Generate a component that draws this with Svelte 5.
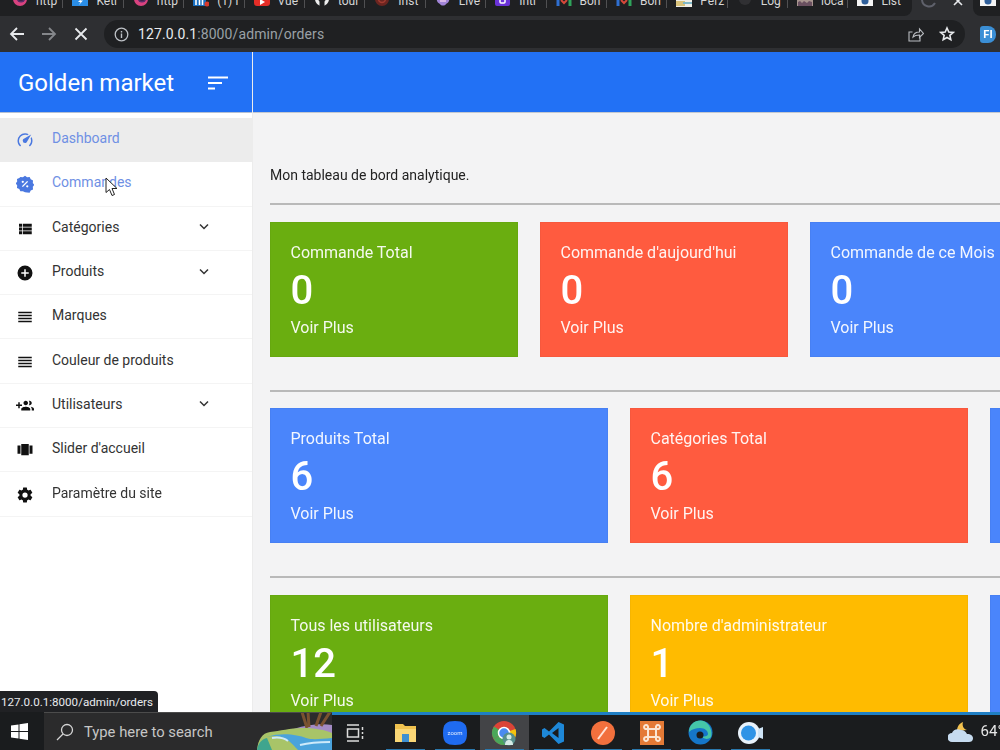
<script>
  const tabs = [
    ['http', 'swirl'], ['Keti', 'bolt'], ['http', 'swirl'], ['(1) I', 'in'], ['Vue', 'yt'],
    ['tour', 'gh'], ['Inst', 'ins'], ['Live', 'live'], ['Intr', 'bs'], ['Bon', 'bon'],
    ['Bon', 'bon'], ['Perz', 'perz'], ['Log', 'log'], ['loca', 'loca'], ['List', 'list']
  ];
  const I = {
    gauge: 'M12,16A3,3 0 0,1 9,13C9,11.88 9.61,10.9 10.5,10.39L20.21,4.77L14.68,14.35C14.18,15.33 13.17,16 12,16M12,3C13.81,3 15.5,3.5 16.97,4.32L14.87,5.53C14,5.19 13,5 12,5A8,8 0 0,0 4,13C4,15.21 4.89,17.21 6.34,18.65H6.35C6.74,19.04 6.74,19.67 6.35,20.06C5.96,20.45 5.32,20.45 4.93,20.07V20.07C3.12,18.26 2,15.76 2,13A10,10 0 0,1 12,3M22,13C22,15.76 20.88,18.26 19.07,20.07V20.07C18.68,20.45 18.05,20.45 17.66,20.06C17.27,19.67 17.27,19.04 17.66,18.65V18.65C19.11,17.2 20,15.2 20,13C20,12 19.81,11 19.46,10.1L20.67,8C21.5,9.5 22,11.18 22,13Z',
    badge: 'M12 1l2.800 2 3.400-.3 1.400 3.100 3.100 1.400-.3 3.400 2 2.400-2 2.800.3 3.400-3.100 1.400-1.400 3.100-3.400-.3L12 23l-2.800-1.500-3.400.3-1.400-3.100-3.100-1.400.3-3.400-2-2.800 2-2.400-.3-3.400 3.100-1.400L5.800 2.700l3.400.3z',
    list: 'M9,5V9H21V5M9,19H21V15H9M9,14H21V10H9M4,9H8V5H4M4,19H8V15H4M4,14H8V10H4V14Z',
    plus: 'M17,13H13V17H11V13H7V11H11V7H13V11H17M12,2A10,10 0 0,0 2,12A10,10 0 0,0 12,22A10,10 0 0,0 22,12A10,10 0 0,0 12,2Z',
    lines: 'M3 15h18v-2H3v2zm0 4h18v-2H3v2zm0-8h18V9H3v2zm0-6v2h18V5H3z',
    group: 'M8 10H5V7H3v3H0v2h3v3h2v-3h3v-2zm10 1c1.66 0 2.99-1.34 2.99-3S19.66 5 18 5c-.32 0-.63.05-.91.14.57.81.9 1.79.9 2.86s-.34 2.04-.9 2.86c.28.09.59.14.91.14zm-5 0c1.66 0 2.99-1.34 2.99-3S14.66 5 13 5s-3 1.34-3 3 1.34 3 3 3zm6.62 2.16c.83.73 1.38 1.66 1.38 2.84v2h3v-2c0-1.54-2.37-2.49-4.38-2.84zM13 13c-2 0-6 1-6 3v2h12v-2c0-2-4-3-6-3z',
    slider: 'M7 19h10V4H7v15zm-5-2h4V6H2v11zM18 6v11h4V6h-4z',
    gear: 'M12,15.5A3.5,3.5 0 0,1 8.5,12A3.5,3.5 0 0,1 12,8.5A3.5,3.5 0 0,1 15.5,12A3.5,3.5 0 0,1 12,15.5M19.43,12.97C19.47,12.65 19.5,12.33 19.5,12C19.5,11.67 19.47,11.34 19.43,11L21.54,9.37C21.73,9.22 21.78,8.95 21.66,8.73L19.66,5.27C19.54,5.05 19.27,4.96 19.05,5.05L16.56,6.05C16.04,5.66 15.5,5.32 14.87,5.07L14.5,2.42C14.46,2.18 14.25,2 14,2H10C9.75,2 9.54,2.18 9.5,2.42L9.13,5.07C8.5,5.32 7.96,5.66 7.44,6.05L4.95,5.05C4.73,4.96 4.46,5.05 4.34,5.27L2.34,8.73C2.21,8.95 2.27,9.22 2.46,9.37L4.57,11C4.53,11.34 4.5,11.67 4.5,12C4.5,12.33 4.53,12.65 4.57,12.97L2.46,14.63C2.27,14.78 2.21,15.05 2.34,15.27L4.34,18.73C4.46,18.95 4.73,19.03 4.95,18.95L7.44,17.94C7.96,18.34 8.5,18.68 9.13,18.93L9.5,21.58C9.54,21.82 9.75,22 10,22H14C14.25,22 14.46,21.82 14.5,21.58L14.87,18.93C15.5,18.67 16.04,18.34 16.56,17.94L19.05,18.95C19.27,19.03 19.54,18.95 19.66,18.73L21.66,15.27C21.78,15.05 21.73,14.78 21.54,14.63L19.43,12.97Z'
  };
  const menu = [
    { label: 'Dashboard', icon: I.gauge, state: 'active' },
    { label: 'Commandes', icon: I.badge, state: 'hot', percent: true },
    { label: 'Catégories', icon: I.list, more: true },
    { label: 'Produits', icon: I.plus, more: true },
    { label: 'Marques', icon: I.lines },
    { label: 'Couleur de produits', icon: I.lines },
    { label: 'Utilisateurs', icon: I.group, more: true },
    { label: "Slider d'accueil", icon: I.slider },
    { label: 'Paramètre du site', icon: I.gear }
  ];
  const rows = [
    { kind: 'r3', cards: [
      ['Commande Total', '0', 'green'], ["Commande d'aujourd'hui", '0', 'red'], ['Commande de ce Mois', '0', 'blue']
    ]},
    { kind: 'r2', cards: [
      ['Produits Total', '6', 'blue'], ['Catégories Total', '6', 'red'], ['Marques Total', '0', 'blue']
    ]},
    { kind: 'r2', cards: [
      ['Tous les utilisateurs', '12', 'green'], ["Nombre d'administrateur", '1', 'yellow'], ['Clients', '11', 'blue']
    ]}
  ];
</script>

{#snippet fav(kind)}
  <svg class="fav" width="16" height="16" viewBox="0 0 16 16">
    {#if kind === 'swirl'}
      <circle cx="8" cy="7" r="7" fill="#d9437f"/><circle cx="9" cy="6" r="4.500" fill="#5d2a6b"/><circle cx="9" cy="5" r="3.500" fill="#1f2022"/>
    {:else if kind === 'bolt'}
      <rect width="16" height="14" fill="#2a8de6"/><path d="M10 6l-4 4h2.500L7 13l4-4.500H8.500z" fill="#fff"/>
    {:else if kind === 'in'}
      <rect width="13" height="14" fill="#1a6fc0"/><path d="M3 8v5M6.500 13V8M9.500 13V8" stroke="#fff" stroke-width="1.600"/><circle cx="14" cy="12" r="2.500" fill="#d8392c"/>
    {:else if kind === 'yt'}
      <rect width="16" height="14" rx="3" fill="#e52d27"/><path d="M6 7l5 3-5 3z" fill="#fff"/>
    {:else if kind === 'gh'}
      <circle cx="8" cy="7" r="7" fill="#ededed"/><circle cx="8" cy="6" r="4" fill="#1f2022"/><rect x="5.500" y="9" width="5" height="5" fill="#1f2022"/>
    {:else if kind === 'ins'}
      <circle cx="8" cy="7" r="7" fill="#6b2520"/><circle cx="8" cy="7" r="3.500" fill="none" stroke="#a13a30" stroke-width="1.500"/>
    {:else if kind === 'live'}
      <path d="M2 6h12c1 3-1 5-3 6-1 2-5 2-6 0-2-1-4-3-3-6z" fill="#a285d8"/><path d="M5 8h6v2H5z" fill="#d9b8e8"/>
    {:else if kind === 'bs'}
      <rect width="15" height="14" rx="2" fill="#6a32d8"/><rect x="5" y="6" width="5" height="5" rx="1" fill="none" stroke="#fff" stroke-width="1.500"/>
    {:else if kind === 'bon'}
      <path d="M2 8v6" stroke="#2f6fd0" stroke-width="3"/><path d="M5 8l3 3 3-3" stroke="#d8493a" stroke-width="2" fill="none"/><path d="M14 8v6" stroke="#2fa35a" stroke-width="3"/>
    {:else if kind === 'perz'}
      <rect width="16" height="15" fill="#f1efe6"/><rect y="9" width="9" height="5" fill="#d8c27a"/><rect x="7" y="10" width="9" height="2" fill="#7fb7c7"/>
    {:else if kind === 'log'}
      <circle cx="8" cy="7" r="6" fill="#303033"/>
    {:else if kind === 'loca'}
      <rect width="16" height="14" fill="#a8958f"/><path d="M1 14V10l2-1 2 2 2-2 3 2 2-2 3 1v4z" fill="#6a5060"/>
    {:else}
      <rect width="16" height="14" fill="#f5f5f5"/><circle cx="8" cy="9" r="3.500" fill="#2f5f9a"/>
    {/if}
  </svg>
{/snippet}

<div class="screen">
  <div class="tabstrip">
    <div class="tabgroup">
      {#each tabs as t}
        <div class="tab">
          {@render fav(t[1])}
          <span class="tabtext">{t[0]}</span>
        </div>
      {/each}
    </div>
    <div class="tabactive">
      <svg width="16" height="10" viewBox="0 0 16 10"><path d="M1 0a7 7 0 0 0 13 3" fill="none" stroke="#5f616b" stroke-width="2"/></svg>
      <svg width="12" height="6" viewBox="0 0 12 6"><path d="M2 -3L10 5M10 -3L2 5" stroke="#e8eaed" stroke-width="1.600"/></svg>
    </div>
    <div class="nexttab">
      {@render fav('list')}
    </div>
  </div>

  <div class="toolbar">
    <svg class="navicon" width="16" height="16" viewBox="0 0 16 16"><path d="M15 8H2M8 2L2 8l6 6" fill="none" stroke="#e8eaed" stroke-width="1.800"/></svg>
    <svg class="navicon" width="16" height="16" viewBox="0 0 16 16"><path d="M1 8h13M8 2l6 6-6 6" fill="none" stroke="#85878b" stroke-width="1.800"/></svg>
    <svg class="navicon" width="16" height="16" viewBox="0 0 16 16"><path d="M2.500 2.500l11 11M13.500 2.500l-11 11" fill="none" stroke="#e8eaed" stroke-width="1.800"/></svg>
    <div class="omnibox">
      <svg width="15" height="15" viewBox="0 0 15 15"><circle cx="7.500" cy="7.500" r="6.300" fill="none" stroke="#bdc1c6" stroke-width="1.300"/><path d="M7.500 6.500v4.500M7.500 4v1.500" stroke="#bdc1c6" stroke-width="1.400"/></svg>
      <span class="url"><b>127.0.0.1</b>:8000/admin/orders</span>
      <span class="grow"></span>
      <svg width="17" height="17" viewBox="0 0 17 17"><path d="M13 9.500V15H2V6h3.500M6 11c.5-3 3-5 6.500-5V3l4 4.500-4 4V9c-3 0-5 .5-6.500 2z" fill="none" stroke="#b9bcc1" stroke-width="1.100"/></svg>
      <svg width="16" height="16" viewBox="0 0 24 24"><path d="M12 3l2.700 6 6.500.7-4.900 4.300 1.400 6.500L12 17.200 6.300 20.500l1.400-6.500-4.900-4.300 6.500-.7z" fill="none" stroke="#e8eaed" stroke-width="2.400"/></svg>
    </div>
    <span class="ext">FI</span>
  </div>

  <div class="page">
    <aside class="sidebar">
      <div class="brand">
        <span class="brandname">Golden market</span>
        <svg width="20" height="14" viewBox="0 0 20 14"><path d="M0 1.500h20M0 7h14M0 12.500h7" stroke="#fff" stroke-width="2"/></svg>
      </div>
      <nav class="menu">
        {#each menu as m}
          <div class="item {m.state ?? ''}">
            <svg class="micon" width="18" height="18" viewBox="0 0 24 24">
              <path d={m.icon} fill="currentColor"/>
              {#if m.percent}
                <path d="M15.500 8.500l-7 7" stroke="#fff" stroke-width="1.800"/>
                <circle cx="9" cy="9" r="1.500" fill="#fff"/>
                <circle cx="15" cy="15" r="1.500" fill="#fff"/>
              {/if}
            </svg>
            <span class="mlabel">{m.label}</span>
            {#if m.more}
              <svg class="chev" width="10" height="7" viewBox="0 0 10 7"><path d="M1 1.500l4 4 4-4" fill="none" stroke="#333" stroke-width="1.500"/></svg>
            {/if}
          </div>
        {/each}
      </nav>
    </aside>

    <div class="content">
      <div class="topbar"></div>
      <main class="main">
        <p class="lead">Mon tableau de bord analytique.</p>
        {#each rows as row}
          <hr />
          <div class="row {row.kind}">
            {#each row.cards as c}
              <div class="card {c[2]}">
                <div class="ctitle">{c[0]}</div>
                <div class="cnum">{c[1]}</div>
                <div class="cmore">Voir Plus</div>
              </div>
            {/each}
          </div>
        {/each}
      </main>
    </div>

    <div class="status">127.0.0.1:8000/admin/orders</div>
    <svg class="cursor" width="14" height="20" viewBox="0 0 14 20"><path d="M1 1v14.500l3.500-3 2.500 6 2.500-1-2.500-6h5z" fill="#fff" stroke="#222" stroke-width="1"/></svg>
  </div>

  <div class="taskbar">
    <svg class="win" width="17" height="17" viewBox="0 0 17 17"><path d="M0 2.500L7.500 1.400V8H0zM8.500 1.300L17 0v8H8.500zM0 9h7.500v6.600L0 14.500zM8.500 9H17v8l-8.500-1.300z" fill="#fff"/></svg>
    <div class="search">
      <svg width="20" height="20" viewBox="0 0 20 20"><circle cx="12" cy="8" r="5.500" fill="none" stroke="#d5d5d5" stroke-width="1.300"/><path d="M8 12l-6 6" stroke="#d5d5d5" stroke-width="1.300"/></svg>
      <span>Type here to search</span>
      <svg class="scene" width="76" height="38" viewBox="0 0 76 38">
        <path d="M36 18c8-4 26-7 40-5v10H36z" fill="#a38bc4"/>
        <path d="M46 0l5 16M52 0l1 15M65 0l-5 14M74 0l-9 14" stroke="#7a5230" stroke-width="3"/>
        <path d="M1 38C2 28 6 21 14 20c10-1 20-4 32-4 12 0 24 2 30 5v17z" fill="#a8c468"/>
        <path d="M1 38C2 31 6 27 11 26l5 12z" fill="#3fa58e"/>
        <path d="M11 25c8-2 14-1 19 2 6 4 8 7 12 11h34V26c-12 1-20 2-26 0-8-3-24-6-39-1z" fill="#4aa3dc"/>
        <path d="M16 26c6-1 12 0 16 3M44 33c8-2 16-3 30-3" stroke="#cdeafa" stroke-width="2" fill="none"/>
      </svg>
    </div>
    <div class="tray">
      <div class="slot first">
        <svg width="20" height="20" viewBox="0 0 20 20"><path d="M2 2h12M2 18h12" stroke="#ddd" stroke-width="1.500"/><rect x="2.500" y="6" width="11" height="8" fill="none" stroke="#ddd" stroke-width="1.500"/><path d="M17.500 4v3M17.500 9v2M17.500 13v3" stroke="#ddd" stroke-width="1.500"/></svg>
      </div>
      <div class="slot run">
        <svg width="23" height="20" viewBox="0 0 23 20"><path d="M1 1h8l2 2h11v16H1z" fill="#f0c24f"/><path d="M1 6h21v13H1z" fill="#fad776"/><rect x="8" y="11" width="7" height="8" fill="#3d8fd1"/></svg>
      </div>
      <div class="slot run">
        <svg width="24" height="24" viewBox="0 0 24 24"><path d="M12 0c9 0 12 3 12 12s-3 12-12 12S0 21 0 12 3 0 12 0z" fill="#1f6bf0"/><text x="12" y="14" font-size="6" fill="#e6efff" text-anchor="middle" font-family="Roboto">zoom</text></svg>
      </div>
      <div class="slot run tile">
        <svg width="26" height="26" viewBox="0 0 26 26"><circle cx="13" cy="13" r="12" fill="#db4437"/><path d="M13 13L2.600 19A12 12 0 0 1 3 6.500z" fill="#4aa75a"/><path d="M13 13l10.400 6A12 12 0 0 0 24.500 9z" fill="#f4c20d"/><path d="M13 13L2.600 19A12 12 0 0 0 23.400 19z" fill="#4aa75a"/><circle cx="13" cy="13" r="5.500" fill="#4a8af0" stroke="#fff" stroke-width="1.500"/><circle cx="18" cy="19" r="6.500" fill="#568f8b"/><circle cx="18" cy="17" r="2.500" fill="#d6ece6"/><path d="M14 25c0-4 2-5 4-5s4 1 4 5z" fill="#d6ece6"/></svg>
      </div>
      <div class="slot run">
        <svg width="24" height="24" viewBox="0 0 24 24"><path d="M17.500 1L8 10.500 3.500 7 1 8.500v7L3.500 17 8 13.500 17.500 23 23 20.500V3.500zM17.500 7v10L11 12z" fill="#1e88d8"/></svg>
      </div>
      <div class="slot run">
        <svg width="24" height="24" viewBox="0 0 24 24"><circle cx="12" cy="12" r="12" fill="#f2703d"/><path d="M7 18l9-12" stroke="#ffe3d6" stroke-width="2"/></svg>
      </div>
      <div class="slot run">
        <svg width="24" height="24" viewBox="0 0 24 24"><rect width="24" height="24" fill="#e47a36"/><path d="M8 8h8v8H8zM8 8H6.500a2 2 0 1 1 1.500-1.500zM16 8V6.500a2 2 0 1 1 1.500 1.500zM16 16h1.500a2 2 0 1 1-1.500 1.500zM8 16v1.500a2 2 0 1 1-1.500-1.500z" fill="none" stroke="#fbe6d4" stroke-width="2"/></svg>
      </div>
      <div class="slot run">
        <svg width="25" height="25" viewBox="0 0 25 25"><circle cx="12.500" cy="12.500" r="12" fill="#1576c9"/><path d="M12 8c5 0 8 3 8 6 0 3-6 3-8 1 2 3 7 6 11 2a12 12 0 0 0 .5-4C23 5 17 .5 12.500 .5 6 .5 1 5 1 12c3-3 7-4 11-4z" fill="#45c6a8"/><circle cx="12" cy="15" r="3.500" fill="#1b1c1e"/></svg>
      </div>
      <div class="slot run">
        <svg width="25" height="22" viewBox="0 0 25 22"><circle cx="11" cy="11" r="11" fill="#e8f2fb"/><circle cx="10.500" cy="11" r="7.500" fill="#2e93e6"/><path d="M20 7l5-2v12l-5-2z" fill="#cfe5f7"/></svg>
      </div>
    </div>
    <span class="grow"></span>
    <svg class="weather" width="26" height="24" viewBox="0 0 26 24"><path d="M9 12c0-5 3-8 6-9-1 3 0 7 4 8z" fill="#f2c14e"/><path d="M4 23a4.500 4.500 0 0 1 0-9c1-3 5-5 9-3 3 0 5 2 6 4 4 0 6 2 6 4.500S23 23 21 23z" fill="#c7dcf0"/></svg>
    <span class="temp">64°</span>
  </div>
</div>

<style>
  :global(body) {
    margin: 0;
    background: #f3f3f4;
  }
  .screen {
    position: relative;
    display: flex;
    flex-direction: column;
    width: 1000px;
    height: 750px;
    overflow: hidden;
    font-family: Roboto, "Liberation Sans", sans-serif;
    color: #222;
    filter: blur(0.3px);
  }
  .grow {
    flex: 1;
  }

  .tabstrip {
    display: flex;
    flex: none;
    height: 16px;
    background: #2e2f32;
    color: #d6d6d6;
    font-size: 12px;
    overflow: hidden;
  }
  .tabgroup {
    display: flex;
    align-items: flex-end;
    flex: none;
    box-sizing: border-box;
    width: 912px;
    padding-left: 3px;
    background: #1f2022;
    border-radius: 0 0 8px 0;
  }
  .tab {
    display: flex;
    align-items: center;
    flex: none;
    gap: 8px;
    box-sizing: border-box;
    width: 60.4px;
    height: 16px;
    margin-bottom: 8px;
    padding: 0 0 0 9px;
    border-right: 1px solid #505052;
  }
  .tab:last-child {
    border-right: 0;
  }
  .fav {
    flex: none;
  }
  .tabtext {
    margin-top: 2px;
    white-space: nowrap;
  }
  .tabactive {
    display: flex;
    align-items: flex-start;
    justify-content: space-between;
    flex: none;
    box-sizing: border-box;
    width: 61px;
    height: 16px;
    padding: 0 9px;
  }
  .nexttab {
    display: flex;
    align-items: flex-end;
    flex: 1;
    height: 16px;
    padding-left: 7px;
    background: #1f2022;
    border-radius: 0 0 0 8px;
  }
  .nexttab .fav {
    margin-bottom: 8px;
  }

  .toolbar {
    display: flex;
    align-items: center;
    flex: none;
    box-sizing: border-box;
    height: 36px;
    padding: 0 4px 0 9px;
    background: #2e2f32;
  }
  .navicon {
    flex: none;
    margin-right: 16px;
  }
  .navicon:nth-child(3) {
    margin-right: 15px;
  }
  .omnibox {
    display: flex;
    align-items: center;
    flex: 1;
    gap: 9px;
    box-sizing: border-box;
    height: 28px;
    padding: 0 10px;
    border-radius: 14px;
    background: #1f2022;
  }
  .omnibox svg:nth-of-type(2) {
    margin-left: 4px;
  }
  .omnibox svg:nth-of-type(3) {
    margin-left: 6px;
  }
  .url {
    color: #9aa0a6;
    font-size: 14px;
    letter-spacing: 0.1px;
  }
  .url b {
    color: #e8eaed;
    font-weight: 400;
  }
  .ext {
    flex: none;
    width: 16px;
    height: 17px;
    margin-left: 15px;
    border-radius: 3px 8px 8px 3px;
    background: #3b8fd6;
    color: #fff;
    font-size: 11px;
    font-weight: 700;
    line-height: 17px;
    text-align: center;
  }

  .page {
    position: relative;
    display: flex;
    flex: 1;
    min-height: 0;
    overflow: hidden;
  }
  .sidebar {
    flex: none;
    box-sizing: border-box;
    width: 253px;
    background: #fff;
    border-right: 1px solid #ececec;
  }
  .brand {
    display: flex;
    align-items: center;
    justify-content: space-between;
    box-sizing: border-box;
    height: 61px;
    padding: 1px 24px 0 18px;
    background: #2271f5;
    border-bottom: 1px solid #b5c0d2;
    color: #fff;
  }
  .brandname {
    font-size: 24px;
  }
  .menu {
    padding-top: 5px;
  }
  .item {
    display: flex;
    align-items: center;
    box-sizing: border-box;
    height: 44.3px;
    padding: 0 43px 3px 16px;
    border-bottom: 1px solid #f4f4f4;
    font-size: 14px;
    color: #333;
  }
  .item.active {
    background: #ececec;
    border-bottom-color: #ececec;
  }
  .item.active,
  .item.hot {
    color: #6f90e4;
  }
  .micon {
    flex: none;
    margin: 4px 18px 0 0;
    color: #111;
  }
  .active .micon,
  .hot .micon {
    color: #4a78e0;
  }
  .mlabel {
    flex: 1;
  }
  .chev {
    flex: none;
  }

  .content {
    flex: none;
    width: 747px;
    min-width: 0;
  }
  .topbar {
    height: 60px;
    background: #2271f5;
    border-bottom: 1px solid #c3c8d0;
  }
  .main {
    padding-left: 17px;
    width: 900px;
  }
  .lead {
    margin: 0;
    padding-top: 53px;
    font-size: 14px;
    line-height: 18px;
    color: #222;
  }
  hr {
    height: 2px;
    margin: 19px 0 17px;
    border: 0;
    background: #b9b9b9;
  }
  .row {
    display: grid;
    gap: 22px;
    height: 135px;
  }
  .row + hr {
    margin: 32.5px 0 16.5px;
  }
  hr:nth-of-type(3) {
    margin: 33px 0 17px;
  }
  .r3 {
    grid-template-columns: repeat(3, 248px);
  }
  .r2 {
    grid-template-columns: repeat(3, 338px);
  }
  .card {
    box-sizing: border-box;
    height: 135px;
    padding: 20px 19.5px;
    color: #fff;
    border: 1px solid rgba(0, 0, 0, 0.03);
  }
  .green { background: #6aae10; }
  .red { background: #ff5b3f; }
  .blue { background: #4a85fb; }
  .yellow { background: #ffbb00; }
  .ctitle {
    font-size: 16px;
    line-height: 20px;
    opacity: 0.93;
  }
  .cnum {
    margin-top: 5px;
    font-size: 40px;
    font-weight: 500;
    line-height: 46px;
  }
  .cmore {
    margin-top: 4px;
    font-size: 16px;
    line-height: 20px;
    opacity: 0.93;
  }

  .status {
    position: absolute;
    left: 0;
    bottom: 0;
    box-sizing: border-box;
    width: 158px;
    height: 21px;
    padding-left: 1px;
    border-radius: 0 4px 0 0;
    background: #202124;
    color: #e8eaed;
    font-size: 11.6px;
    line-height: 22px;
    white-space: nowrap;
  }
  .cursor {
    position: absolute;
    left: 105px;
    top: 125px;
  }

  .taskbar {
    display: flex;
    align-items: center;
    flex: none;
    height: 38px;
    background: #1a1c1e;
    color: #e6e6e6;
  }
  .win {
    flex: none;
    margin: 0 16px 0 11px;
  }
  .search {
    position: relative;
    display: flex;
    align-items: center;
    flex: none;
    gap: 9px;
    box-sizing: border-box;
    width: 288px;
    height: 38px;
    padding-left: 11px;
    background: #2b2b2c;
    border-top: 1px solid #4c4c4c;
    color: #c6c6c6;
    font-size: 14.8px;
    overflow: hidden;
  }
  .scene {
    position: absolute;
    right: 0;
    top: -1px;
  }
  .tray {
    display: flex;
    flex: none;
    box-sizing: border-box;
    width: 700px;
    height: 38px;
    margin-right: -700px;
    border-top: 3px solid #1f7fc4;
  }
  .slot {
    display: flex;
    align-items: center;
    justify-content: center;
    flex: none;
    position: relative;
    box-sizing: border-box;
    width: 49.2px;
    height: 35px;
  }
  .slot.first {
    padding-right: 3px;
  }
  .slot.run::after {
    content: "";
    position: absolute;
    left: 5px;
    right: 5px;
    bottom: 0;
    height: 1px;
    background: #2a78ad;
  }
  .slot.tile {
    background: #434447;
  }
  .weather {
    flex: none;
    margin-right: 7px;
  }
  .temp {
    font-size: 15px;
    margin-right: -3px;
    white-space: nowrap;
  }
</style>
